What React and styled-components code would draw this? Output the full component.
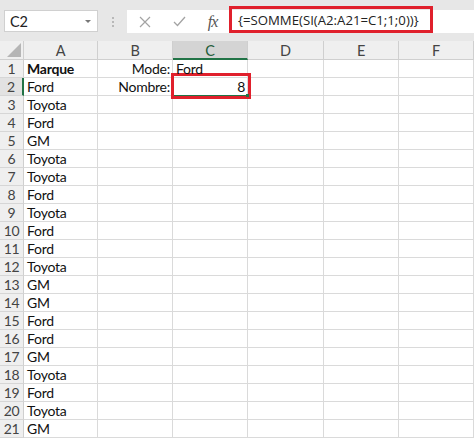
import React from "react";
import styled, { createGlobalStyle } from "styled-components";

const GlobalStyle = createGlobalStyle`
  html, body {
    margin: 0;
    padding: 0;
    background: #ffffff;
    overflow: hidden;
  }
  body {
    font-family: Lato, "Open Sans", sans-serif;
  }
`;

const Window = styled.div`
  width: 474px;
  height: 439px;
  overflow: hidden;
  background: #ffffff;
`;

const FormulaBar = styled.div`
  height: 41px;
  box-sizing: border-box;
  background: #e7e7e7;
  display: flex;
  align-items: flex-start;
  padding: 10px 0 0 4px;
`;

const NameBox = styled.div`
  width: 94px;
  height: 22px;
  box-sizing: border-box;
  background: #ffffff;
  border: 1px solid #d0d0d0;
  display: flex;
  align-items: center;
  justify-content: space-between;
  padding: 0 6px 0 5px;
  font-size: 14.5px;
  letter-spacing: -0.2px;
  color: #222;
`;

const Caret = styled.span`
  width: 0;
  height: 0;
  border-left: 3px solid transparent;
  border-right: 3px solid transparent;
  border-top: 3px solid #777;
`;

const Dots = styled.div`
  width: 29px;
  height: 23px;
  display: flex;
  flex-direction: column;
  align-items: center;
  justify-content: center;
  gap: 2px;
  span {
    width: 2px;
    height: 2px;
    border-radius: 50%;
    background: #a8a8a8;
  }
`;

const FormulaBox = styled.div`
  flex: 1;
  height: 23px;
  background: #ffffff;
  display: flex;
  align-items: flex-end;
`;

const IconSlot = styled.div`
  width: ${(p) => p.$w}px;
  height: 23px;
  display: flex;
  align-items: center;
  justify-content: center;
`;

const Fx = styled.span`
  font-family: "Liberation Serif", "DejaVu Serif", serif;
  font-style: italic;
  font-size: 16px;
  color: #555;
  letter-spacing: -1px;
`;

const FormulaInput = styled.div`
  width: 204px;
  height: 27px;
  box-sizing: border-box;
  border: 3px solid #e0202c;
  display: flex;
  align-items: center;
  padding-left: 6px;
  font-family: "Open Sans", "Noto Sans", sans-serif;
  font-size: 13.2px;
  color: #222;
  white-space: nowrap;
`;

const Grid = styled.div`
  display: grid;
  grid-template-columns: 24px 74px 75px 75px 76px 75px 75px;
  grid-template-rows: 19px;
  grid-auto-rows: 18px;
  font-size: 14px;
  letter-spacing: -0.25px;
`;

const ColHeader = styled.div`
  box-sizing: border-box;
  background: ${(p) => (p.$active ? "#d4d4d4" : "#efefef")};
  border-right: 1px solid #cfcfcf;
  border-bottom: ${(p) => (p.$active ? "2px solid #217346" : "1px solid #cfcfcf")};
  display: flex;
  align-items: center;
  justify-content: center;
  font-size: 14.5px;
  color: ${(p) => (p.$active ? "#1f5d3a" : "#444")};
  padding-top: ${(p) => (p.$active ? "1px" : "0")};
`;

const Corner = styled.div`
  box-sizing: border-box;
  background: #efefef;
  border-right: 1px solid #cfcfcf;
  border-bottom: 1px solid #cfcfcf;
  display: flex;
  align-items: flex-end;
  justify-content: flex-end;
  padding: 0 2px 2px 0;
`;

const RowHeader = styled.div`
  box-sizing: border-box;
  background: ${(p) => (p.$active ? "#e2e2e2" : "#efefef")};
  border-right: ${(p) => (p.$active ? "2px solid #217346" : "1px solid #cfcfcf")};
  border-bottom: 1px solid #d6d6d6;
  display: flex;
  align-items: center;
  justify-content: center;
  color: #444;
`;

const Cell = styled.div`
  position: relative;
  box-sizing: border-box;
  border-right: 1px solid #dadada;
  border-bottom: 1px solid #dadada;
  display: flex;
  align-items: center;
  justify-content: ${(p) => (p.$align === "right" ? "flex-end" : "flex-start")};
  padding: 0 ${(p) => (p.$align === "right" ? "2px" : "0")} 0 3px;
  color: #111;
  white-space: nowrap;
  font-weight: ${(p) => (p.$bold ? 700 : 400)};
`;

const Selection = styled.div`
  position: absolute;
  left: -2px;
  top: -5px;
  right: -4px;
  bottom: -4px;
  border: 3px solid #e0202c;
  pointer-events: none;
  z-index: 2;
  &::before {
    content: "";
    position: absolute;
    left: 0;
    right: 0;
    bottom: 0;
    height: 1px;
    background: #217346;
  }
  &::after {
    content: "";
    position: absolute;
    right: -1px;
    bottom: -1px;
    width: 3px;
    height: 3px;
    background: #217346;
  }
`;

const CellText = styled.span`
  position: relative;
  z-index: 3;
`;

const brands = [
  "Ford", "Toyota", "Ford", "GM", "Toyota", "Toyota", "Ford", "Toyota", "Ford", "Ford",
  "Toyota", "GM", "GM", "Ford", "Ford", "GM", "Toyota", "Ford", "Toyota", "GM",
];

const rows = [
  { a: "Marque", bold: true, b: "Mode:", c: "Ford", cAlign: "left" },
  { a: brands[0], b: "Nombre:", c: "8", cAlign: "right", active: true },
  ...brands.slice(1).map((a) => ({ a })),
];

const columns = ["A", "B", "C", "D", "E", "F"];

function CrossIcon() {
  return (
    <svg width="12" height="12" viewBox="0 0 12 12">
      <path d="M1 1L11 11M11 1L1 11" stroke="#a3a3a3" strokeWidth="1.2" fill="none" />
    </svg>
  );
}

function CheckIcon() {
  return (
    <svg width="13" height="11" viewBox="0 0 13 11">
      <path d="M1 6L4.5 9.5L12 1" stroke="#a3a3a3" strokeWidth="1.3" fill="none" />
    </svg>
  );
}

function CornerTriangle() {
  return (
    <svg width="14" height="14" viewBox="0 0 14 14">
      <path d="M14 0L14 14L0 14Z" fill="#b5b5b5" />
    </svg>
  );
}

export default function App() {
  return (
    <Window>
      <GlobalStyle />
      <FormulaBar>
        <NameBox>
          C2
          <Caret />
        </NameBox>
        <Dots>
          <span />
          <span />
          <span />
        </Dots>
        <FormulaBox>
          <IconSlot $w={36}>
            <CrossIcon />
          </IconSlot>
          <IconSlot $w={33}>
            <CheckIcon />
          </IconSlot>
          <IconSlot $w={33}>
            <Fx>fx</Fx>
          </IconSlot>
          <FormulaInput>{"{=SOMME(SI(A2:A21=C1;1;0))}"}</FormulaInput>
        </FormulaBox>
      </FormulaBar>

      <Grid>
        <Corner>
          <CornerTriangle />
        </Corner>
        {columns.map((c) => (
          <ColHeader key={c} $active={c === "C"}>
            {c}
          </ColHeader>
        ))}

        {rows.map((r, i) => (
          <React.Fragment key={i}>
            <RowHeader $active={r.active}>{i + 1}</RowHeader>
            <Cell $bold={r.bold}>{r.a}</Cell>
            <Cell $align="right">{r.b}</Cell>
            <Cell $align={r.cAlign}>
              {r.active && <Selection />}
              <CellText>{r.c}</CellText>
            </Cell>
            <Cell />
            <Cell />
            <Cell />
          </React.Fragment>
        ))}
      </Grid>
    </Window>
  );
}
